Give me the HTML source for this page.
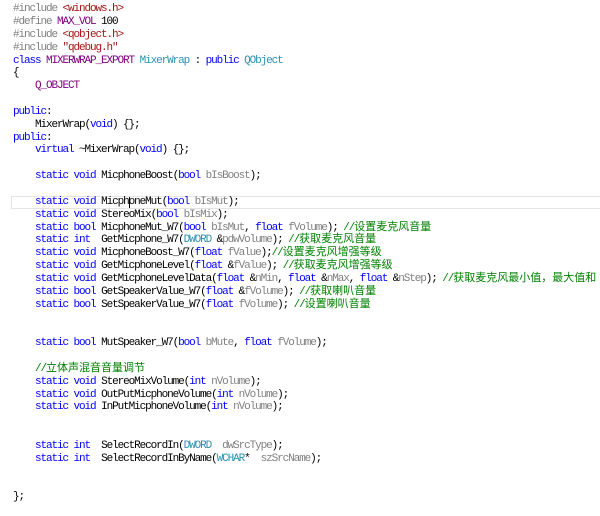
<!DOCTYPE html>
<html><head><meta charset="utf-8"><style>
html,body{margin:0;padding:0;background:#fff;width:600px;height:516px;overflow:hidden}
pre{margin:0;position:absolute;left:13px;top:3.2px;font-family:"Liberation Mono","Noto Sans CJK SC",monospace;font-size:11px;letter-spacing:-1.1px;line-height:12.85px;color:#000;white-space:pre}
pre span{line-height:0}
.k{color:#0000ff}.p{color:#808080}.s{color:#a31515}.m{color:#800080}.t{color:#2b91af}.g{color:#808080}.c{color:#008000}
.z{letter-spacing:0;font-family:"Noto Sans CJK SC",sans-serif;font-size:11px}
.cur{position:absolute;left:11px;top:196px;width:600px;height:13px;border:1px solid #e4e4e4;box-sizing:border-box}
.caret{position:absolute;left:129px;top:197px;width:1px;height:11px;background:#000}
</style></head><body>
<div class="cur"></div>
<pre><span class="p">#include</span> <span class="s">&lt;windows.h&gt;</span>
<span class="p">#define</span> <span class="m">MAX_VOL</span> 100
<span class="p">#include</span> <span class="s">&lt;qobject.h&gt;</span>
<span class="p">#include</span> <span class="s">"qdebug.h"</span>
<span class="k">class</span> <span class="m">MIXERWRAP_EXPORT</span> <span class="t">MixerWrap</span> : <span class="k">public</span> <span class="t">QObject</span>
{
    <span class="m">Q_OBJECT</span>

<span class="k">public</span>:
    MixerWrap(<span class="k">void</span>) {};
<span class="k">public</span>:
    <span class="k">virtual</span> ~MixerWrap(<span class="k">void</span>) {};

    <span class="k">static</span> <span class="k">void</span> MicphoneBoost(<span class="k">bool</span> <span class="g">bIsBoost</span>);

    <span class="k">static</span> <span class="k">void</span> MicphoneMut(<span class="k">bool</span> <span class="g">bIsMut</span>);
    <span class="k">static</span> <span class="k">void</span> StereoMix(<span class="k">bool</span> <span class="g">bIsMix</span>);
    <span class="k">static</span> <span class="k">bool</span> MicphoneMut_W7(<span class="k">bool</span> <span class="g">bIsMut</span>, <span class="k">float</span> <span class="g">fVolume</span>); <span class="c">//<span class="z">设置麦克风音量</span></span>
    <span class="k">static</span> <span class="k">int</span>  GetMicphone_W7(<span class="t">DWORD</span> &amp;<span class="g">pdwVolume</span>); <span class="c">//<span class="z">获取麦克风音量</span></span>
    <span class="k">static</span> <span class="k">void</span> MicphoneBoost_W7(<span class="k">float</span> <span class="g">fValue</span>);<span class="c">//<span class="z">设置麦克风增强等级</span></span>
    <span class="k">static</span> <span class="k">void</span> GetMicphoneLevel(<span class="k">float</span> &amp;<span class="g">fValue</span>); <span class="c">//<span class="z">获取麦克风增强等级</span></span>
    <span class="k">static</span> <span class="k">void</span> GetMicphoneLevelData(<span class="k">float</span> &amp;<span class="g">nMin</span>, <span class="k">float</span> &amp;<span class="g">nMax</span>, <span class="k">float</span> &amp;<span class="g">nStep</span>); <span class="c">//<span class="z">获取麦克风最小值，最大值和</span></span>
    <span class="k">static</span> <span class="k">bool</span> GetSpeakerValue_W7(<span class="k">float</span> &amp;<span class="g">fVolume</span>); <span class="c">//<span class="z">获取喇叭音量</span></span>
    <span class="k">static</span> <span class="k">bool</span> SetSpeakerValue_W7(<span class="k">float</span> <span class="g">fVolume</span>); <span class="c">//<span class="z">设置喇叭音量</span></span>


    <span class="k">static</span> <span class="k">bool</span> MutSpeaker_W7(<span class="k">bool</span> <span class="g">bMute</span>, <span class="k">float</span> <span class="g">fVolume</span>);

    <span class="c">//<span class="z">立体声混音音量调节</span></span>
    <span class="k">static</span> <span class="k">void</span> StereoMixVolume(<span class="k">int</span> <span class="g">nVolume</span>);
    <span class="k">static</span> <span class="k">void</span> OutPutMicphoneVolume(<span class="k">int</span> <span class="g">nVolume</span>);
    <span class="k">static</span> <span class="k">void</span> InPutMicphoneVolume(<span class="k">int</span> <span class="g">nVolume</span>);


    <span class="k">static</span> <span class="k">int</span>  SelectRecordIn(<span class="t">DWORD</span>  <span class="g">dwSrcType</span>);
    <span class="k">static</span> <span class="k">int</span>  SelectRecordInByName(<span class="t">WCHAR</span>*  <span class="g">szSrcName</span>);


};</pre>
<div class="caret"></div>
</body></html>
